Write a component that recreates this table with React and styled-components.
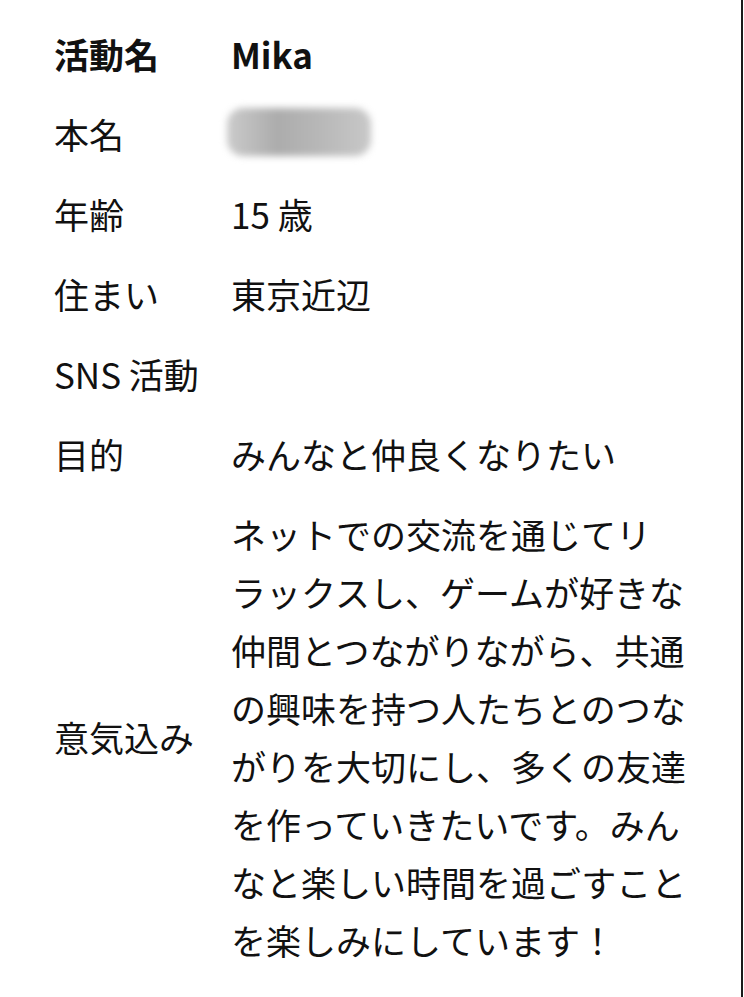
import styled, { createGlobalStyle } from "styled-components";

const GlobalStyle = createGlobalStyle`
  html, body {
    margin: 0;
    padding: 0;
    background: #fff;
  }
  body {
    font-family: "Noto Sans CJK JP", "Noto Sans", sans-serif;
    color: #111;
  }
`;

const rows = [
  { label: "活動名", value: "Mika", bold: true },
  { label: "本名", hidden: true },
  { label: "年齢", value: "15 歳" },
  { label: "住まい", value: "東京近辺" },
  { label: "SNS 活動", value: "" },
  { label: "目的", value: "みんなと仲良くなりたい" },
  {
    label: "意気込み",
    value:
      "ネットでの交流を通じてリラックスし、ゲームが好きな仲間とつながりながら、共通の興味を持つ人たちとのつながりを大切にし、多くの友達を作っていきたいです。みんなと楽しい時間を過ごすことを楽しみにしています！",
  },
];

export default function App() {
  return (
    <>
      <GlobalStyle />
      <Page lang="ja">
        <Table>
          {rows.map((row) => (
            <Row key={row.label}>
              <Label $bold={row.bold}>{row.label}</Label>
              <Value $bold={row.bold}>
                {row.hidden ? <Blurred /> : row.value}
              </Value>
            </Row>
          ))}
        </Table>
      </Page>
    </>
  );
}

// Styling
const Page = styled.div`
  width: 743px;
  min-height: 997px;
  box-sizing: border-box;
  border-right: 2px solid #1a1a1a;
  padding: 14px 0 0 54px;
`;

const Table = styled.div`
  display: flex;
  flex-direction: column;
`;

const Row = styled.div`
  display: grid;
  grid-template-columns: 177px 470px;
  align-items: center;
  padding: 11px 0;
  font-size: 35px;
  line-height: 58px;
`;

const Label = styled.div`
  font-weight: ${(p) => (p.$bold ? 700 : 400)};
  white-space: nowrap;
`;

const Value = styled.div`
  font-weight: ${(p) => (p.$bold ? 700 : 400)};
  min-height: 58px;
  line-break: strict;
  word-break: normal;
`;

const Blurred = styled.div`
  width: 144px;
  height: 48px;
  margin: 3px 0 0 -4px;
  border-radius: 16px;
  background: linear-gradient(90deg, #cbcbcb, #acacac 35%, #b8b8b8 65%, #c8c8c8);
  filter: blur(3.5px);
`;
